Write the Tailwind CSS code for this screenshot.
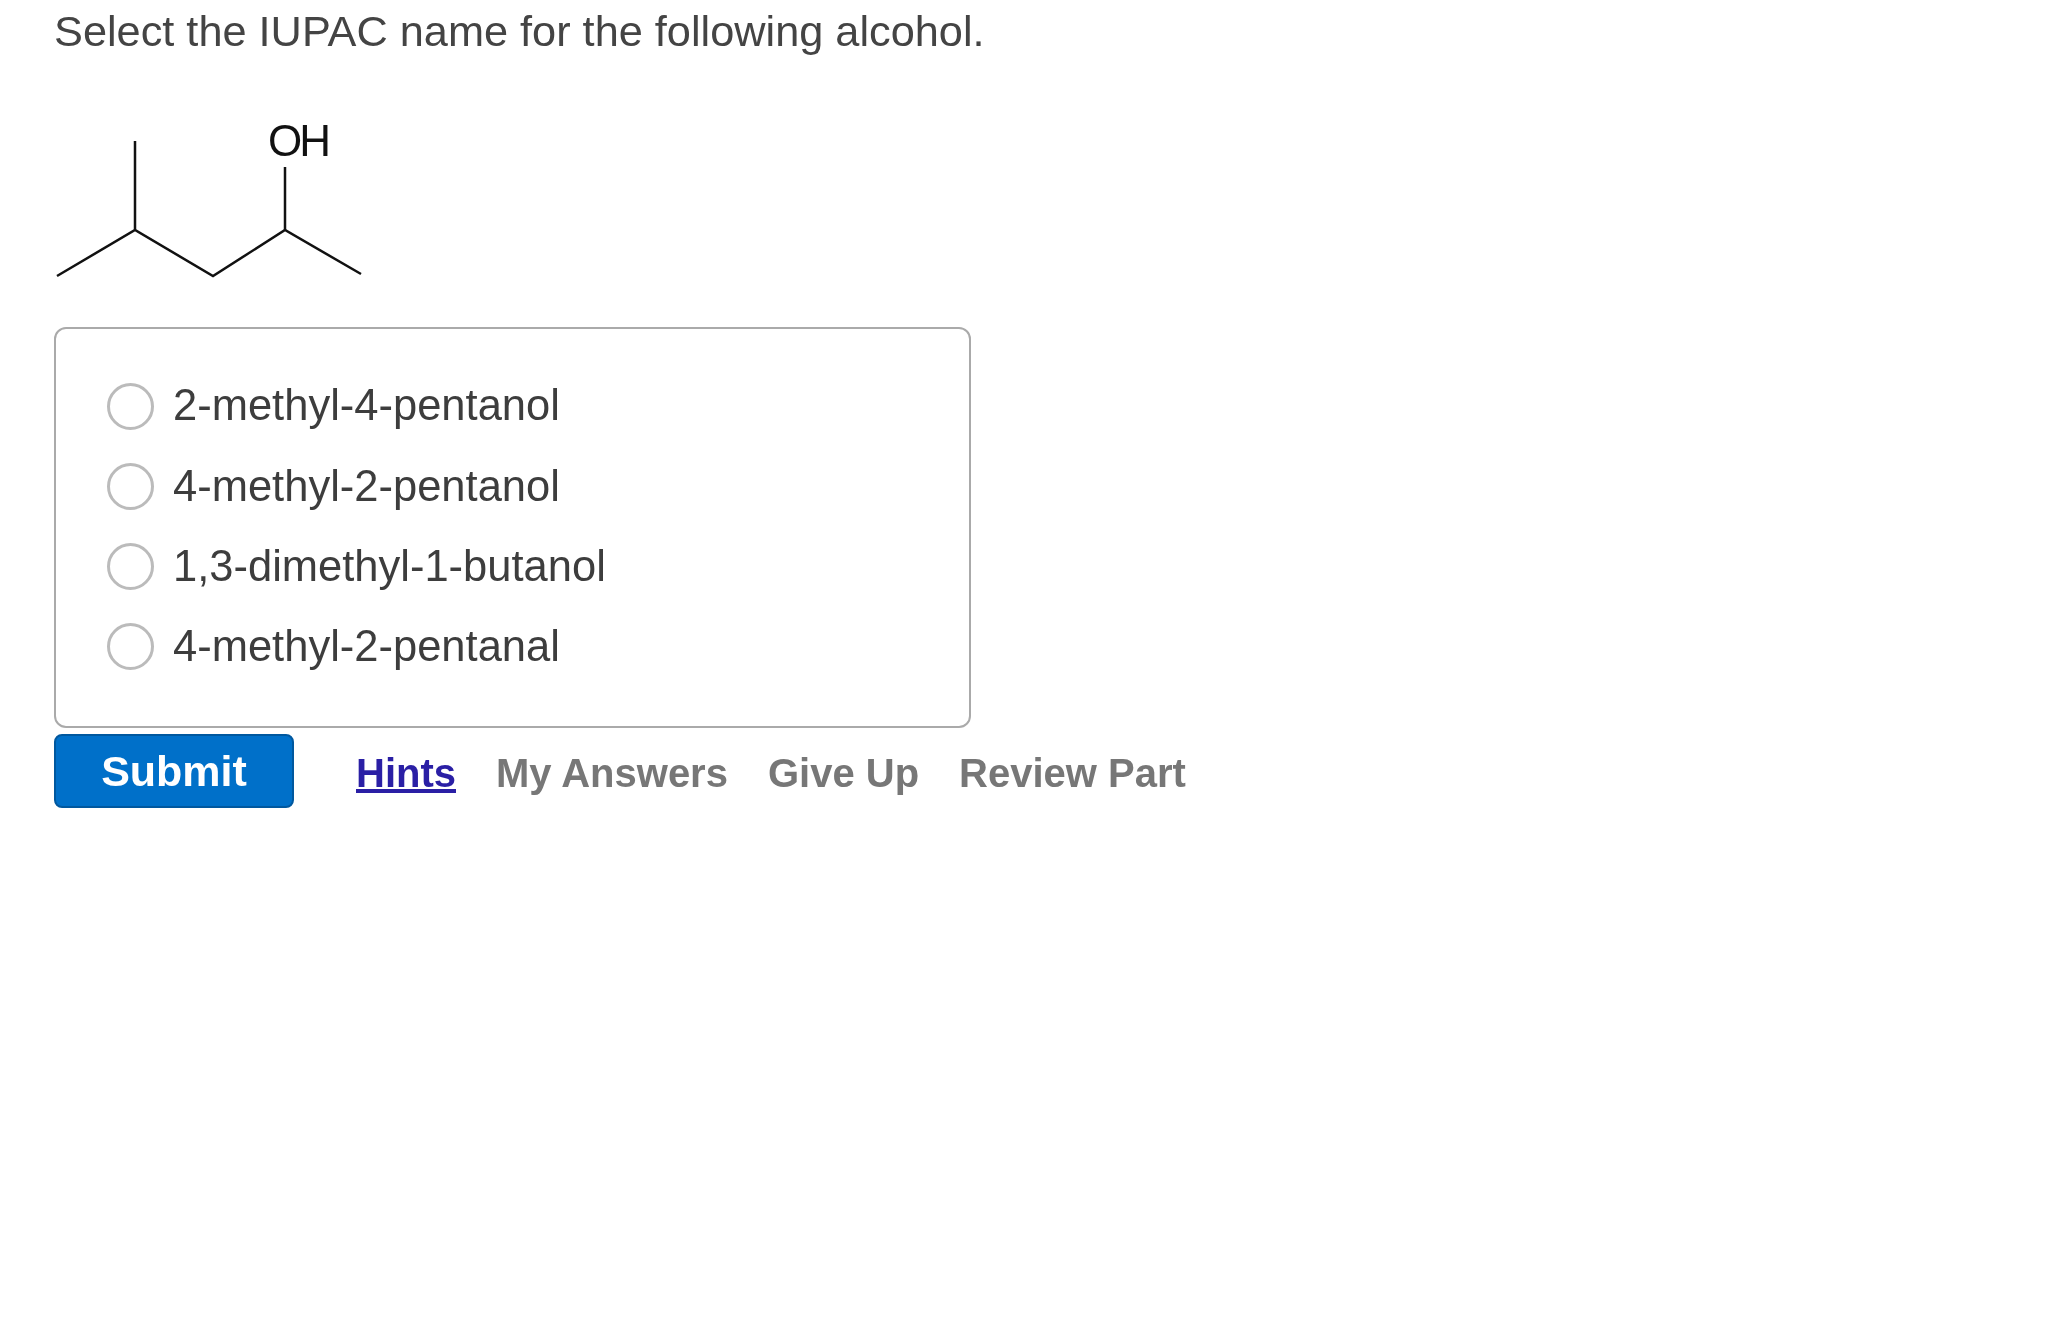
<!DOCTYPE html>
<html lang="en">
  <head>
    <meta charset="UTF-8" />
    <title>Select the IUPAC name</title>
    <script src="https://cdn.jsdelivr.net/npm/@tailwindcss/browser@4"></script>
  </head>
  <body class="bg-white font-['Liberation_Sans',Arial,sans-serif] text-[#3d3d3d]">
    <!-- the reference is an upscaled capture, hence the slight blur -->
    <div class="pl-[54px] pt-[6px] blur-[0.7px]">
      <p class="text-[43.3px] leading-[50px] text-[#444444]">Select the IUPAC name for the following alcohol.</p>

      <!-- molecule -->
      <svg class="mt-[55px] block" width="330" height="170" viewBox="0 0 330 170" fill="none">
        <g stroke="#111111" stroke-width="2.5">
          <path d="M81 30V119M3 165L81 119L159 165L231 119L307 163" />
          <path d="M231 56V119" />
        </g>
        <text x="214" y="45" font-size="44" letter-spacing="-3" fill="#111111" font-family="Liberation Sans">OH</text>
      </svg>

      <div class="mt-[46px] h-[401px] w-[917px] rounded-[12px] border-2 border-[#aaaaaa] pl-[51px] pt-[37px]">
        <div class="flex h-[80.2px] items-center gap-[19px]">
          <span class="size-[47px] shrink-0 rounded-full border-[3px] border-[#bbbbbb]"></span>
          <span class="text-[43.5px]">2-methyl-4-pentanol</span>
        </div>
        <div class="flex h-[80.2px] items-center gap-[19px]">
          <span class="size-[47px] shrink-0 rounded-full border-[3px] border-[#bbbbbb]"></span>
          <span class="text-[43.5px]">4-methyl-2-pentanol</span>
        </div>
        <div class="flex h-[80.2px] items-center gap-[19px]">
          <span class="size-[47px] shrink-0 rounded-full border-[3px] border-[#bbbbbb]"></span>
          <span class="text-[43.5px]">1,3-dimethyl-1-butanol</span>
        </div>
        <div class="flex h-[80.2px] items-center gap-[19px]">
          <span class="size-[47px] shrink-0 rounded-full border-[3px] border-[#bbbbbb]"></span>
          <span class="text-[43.5px]">4-methyl-2-pentanal</span>
        </div>
      </div>

      <div class="mt-[6px] flex items-center">
        <button class="h-[74px] w-[240px] rounded-[8px] border-2 border-[#00589f] bg-[#0070c9] text-[43px] font-bold text-white">Submit</button>
        <div class="ml-[62px] mt-[3px] flex gap-[40px] text-[40px] font-bold text-[#777777]">
          <a class="text-[#2a1fa5] underline">Hints</a>
          <span>My Answers</span>
          <span>Give Up</span>
          <span>Review Part</span>
        </div>
      </div>
    </div>
  </body>
</html>
